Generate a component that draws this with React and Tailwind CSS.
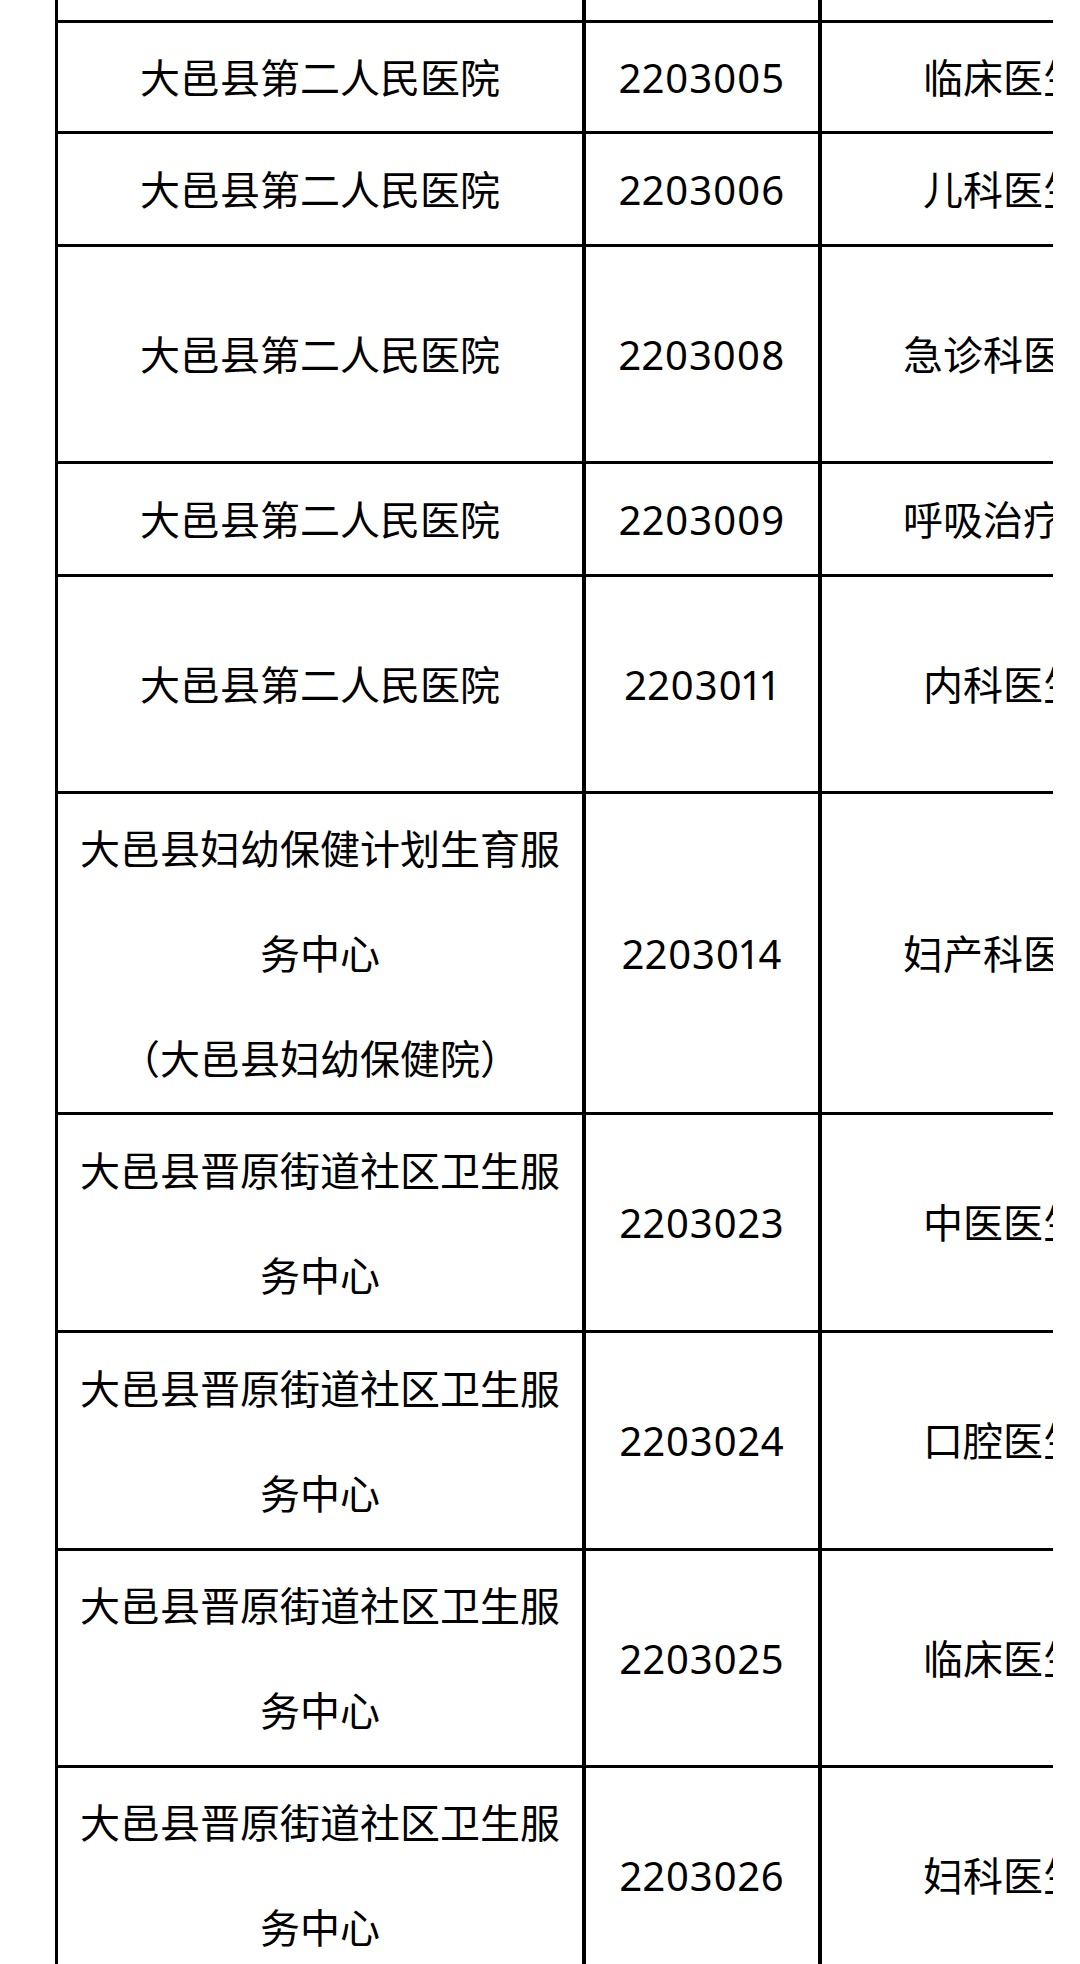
const rows = [
  { name: ['大邑县第二人民医院'], code: '2203005', post: '临床医生', h: 'h-[111px]' },
  { name: ['大邑县第二人民医院'], code: '2203006', post: '儿科医生', h: 'h-[113px]' },
  { name: ['大邑县第二人民医院'], code: '2203008', post: '急诊科医生', h: 'h-[217px]' },
  { name: ['大邑县第二人民医院'], code: '2203009', post: '呼吸治疗师', h: 'h-[113px]' },
  { name: ['大邑县第二人民医院'], code: '2203011', post: '内科医生', h: 'h-[217px]' },
  {
    name: ['大邑县妇幼保健计划生育服务中心', '（大邑县妇幼保健院）'],
    code: '2203014',
    post: '妇产科医生',
    h: 'h-[321px]',
  },
  { name: ['大邑县晋原街道社区卫生服务中心'], code: '2203023', post: '中医医生', h: 'h-[218px]' },
  { name: ['大邑县晋原街道社区卫生服务中心'], code: '2203024', post: '口腔医生', h: 'h-[218px]' },
  { name: ['大邑县晋原街道社区卫生服务中心'], code: '2203025', post: '临床医生', h: 'h-[217px]' },
  { name: ['大邑县晋原街道社区卫生服务中心'], code: '2203026', post: '妇科医生', h: 'h-[217px]' },
];

function Row({ row }) {
  return (
    <div className={`flex shrink-0 border-b-[3px] border-black ${row.h}`}>
      <div className="flex w-[528px] shrink-0 items-center justify-center border-r-4 border-black px-[12px] text-center">
        <div>
          {row.name.map((line, i) => (
            <div key={i}>{line}</div>
          ))}
        </div>
      </div>
      <div className="flex w-[236px] shrink-0 items-center justify-center border-r-4 border-black tracking-[0.8px] proportional-nums">
        {row.code}
      </div>
      <div className="flex w-[362px] shrink-0 items-center justify-center whitespace-nowrap">
        {row.post}
      </div>
    </div>
  );
}

export default function App() {
  return (
    <div className="h-[1964px] w-[1080px] overflow-hidden bg-white">
      <div className="w-[1053px] overflow-hidden pl-[55px] font-['Noto_Sans','Noto_Sans_CJK_SC',sans-serif] text-[40px] leading-[105px] text-black">
        <div className="flex w-[1140px] flex-col border-l-[3px] border-black">
          {/* tail of the row above */}
          <div className="flex h-[23px] shrink-0 border-b-[3px] border-black">
            <div className="w-[528px] shrink-0 border-r-4 border-black" />
            <div className="w-[236px] shrink-0 border-r-4 border-black" />
            <div className="w-[362px] shrink-0" />
          </div>
          {rows.map((row) => (
            <Row key={row.code} row={row} />
          ))}
        </div>
      </div>
    </div>
  );
}
